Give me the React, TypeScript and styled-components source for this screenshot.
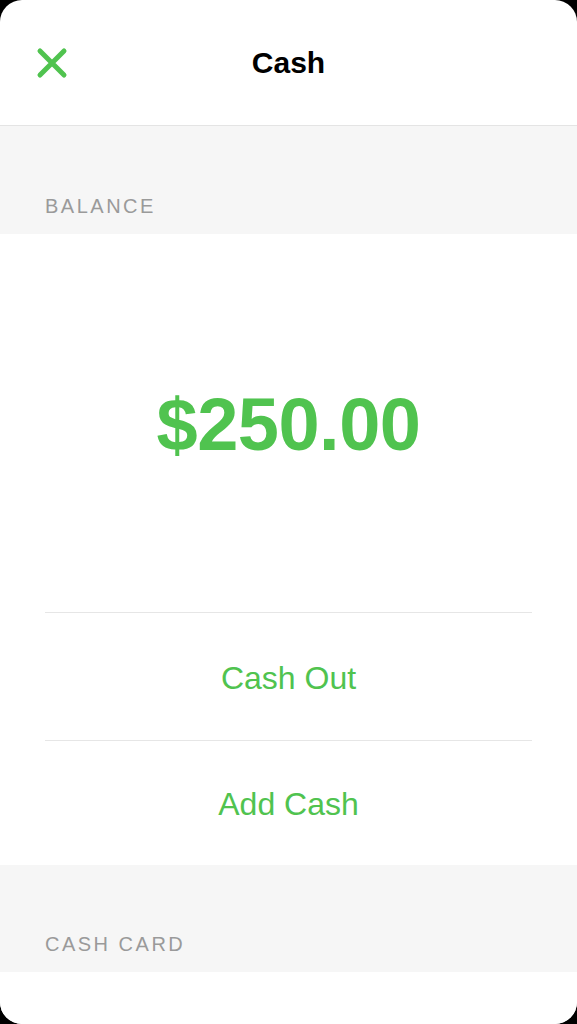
import React from "react";
import styled, { createGlobalStyle } from "styled-components";

const GREEN = "#50c34f";

const GlobalStyle = createGlobalStyle`
  html, body {
    margin: 0;
    padding: 0;
    background: #000;
  }
  body {
    font-family: "Liberation Sans", Arial, sans-serif;
  }
`;

const Screen = styled.div`
  display: flex;
  flex-direction: column;
  width: 577px;
  height: 1024px;
  background: #fff;
  border-radius: 22px;
  overflow: hidden;
`;

const Header = styled.header`
  display: grid;
  grid-template-columns: 90px 1fr 90px;
  align-items: center;
  flex-shrink: 0;
  height: 126px;
  border-bottom: 1px solid #e4e4e4;
  box-sizing: border-box;
`;

const CloseButton = styled.button`
  display: flex;
  align-items: center;
  justify-content: center;
  width: 32px;
  height: 32px;
  margin-left: 36px;
  padding: 0;
  border: none;
  background: none;
  cursor: pointer;
`;

const Title = styled.h1`
  margin: 0;
  font-size: 30px;
  font-weight: 700;
  color: #000;
  text-align: center;
`;

const SectionLabel = styled.div<{ $height: number; $bottom: number }>`
  display: flex;
  align-items: flex-end;
  flex-shrink: 0;
  height: ${(p) => p.$height}px;
  padding: 0 45px ${(p) => p.$bottom}px;
  box-sizing: border-box;
  background: #f6f6f6;
  font-size: 20px;
  letter-spacing: 2.5px;
  color: #9a9a9a;
`;

const BalancePanel = styled.section`
  display: flex;
  flex-direction: column;
  flex-shrink: 0;
  height: 631px;
`;

const Amount = styled.div`
  display: flex;
  align-items: center;
  justify-content: center;
  height: 378px;
  padding-top: 3px;
  box-sizing: border-box;
  font-size: 74px;
  font-weight: 700;
  letter-spacing: -0.5px;
  color: ${GREEN};
`;

const ActionRow = styled.button<{ $height: number }>`
  display: flex;
  align-items: center;
  justify-content: center;
  height: ${(p) => p.$height}px;
  margin: 0 45px;
  padding: 3px 0 0;
  border: none;
  border-top: 1px solid #e6e6e6;
  background: none;
  font-family: inherit;
  font-size: 32px;
  color: ${GREEN};
  cursor: pointer;
`;

const Footer = styled.div`
  flex: 1;
  background: #fff;
`;

const CloseIcon = () => (
  <svg width="32" height="32" viewBox="0 0 32 32">
    <path
      d="M4 4 L28 28 M28 4 L4 28"
      stroke={GREEN}
      strokeWidth="5"
      strokeLinecap="round"
      fill="none"
    />
  </svg>
);

export default function App() {
  return (
    <>
      <GlobalStyle />
      <Screen>
        <Header>
          <CloseButton aria-label="Close">
            <CloseIcon />
          </CloseButton>
          <Title>Cash</Title>
          <div />
        </Header>
        <SectionLabel $height={108} $bottom={16}>
          BALANCE
        </SectionLabel>
        <BalancePanel>
          <Amount>$250.00</Amount>
          <ActionRow $height={128}>Cash Out</ActionRow>
          <ActionRow $height={125}>Add Cash</ActionRow>
        </BalancePanel>
        <SectionLabel $height={107} $bottom={16}>
          CASH CARD
        </SectionLabel>
        <Footer />
      </Screen>
    </>
  );
}
